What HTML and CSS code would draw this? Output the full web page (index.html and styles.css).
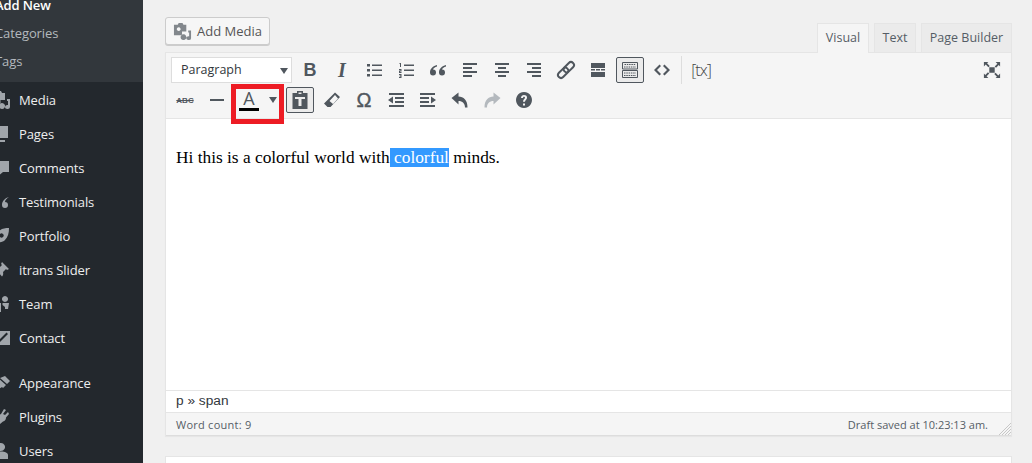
FILE: index.html
```html
<!DOCTYPE html>
<html lang="en">
<head>
<meta charset="utf-8">
<title>Edit Post</title>
<link rel="stylesheet" href="styles.css">
</head>
<body>
<aside class="sidebar">
  <ul class="submenu">
    <li class="current">Add New</li>
    <li>Categories</li>
    <li>Tags</li>
  </ul>
  <ul class="menu">
    <li><svg viewBox="0 0 20 20"><path d="M1 3h4l1-2h4l1 2h3v7H9.500v4H1zM6 5.500a2 2 0 1 0 .01 0z M16 9h3v8a2.500 2 0 1 1-2-2V11h-1zM11 13a3 3 0 1 0 .01 0z" fill-rule="evenodd"/></svg>Media</li>
    <li><svg viewBox="0 0 20 20"><path d="M3 2h14v12H3zM1 15h2v1h11v2H1z"/></svg>Pages</li>
    <li><svg viewBox="0 0 20 20"><path d="M3 3h15v11h-6l-5 4v-4H3z"/></svg>Comments</li>
    <li><svg viewBox="0 0 20 20"><path d="M9 5C5 6 2 9 2 13a3 3 0 1 0 3-3c0-2 2-4 4-5zM18 5c-4 1-7 4-7 8a3 3 0 1 0 3-3c0-2 2-4 4-5z"/></svg>Testimonials</li>
    <li><svg viewBox="0 0 20 20"><path d="M18 2c-5 0-9 1-12 5-2 3-2 6-1 8l-3 3 1 1 3-3c3 1 6 0 8-2 3-3 4-7 4-12zM9 8a2 2 0 1 1 3 3 2 2 0 0 1-3-3z" fill-rule="evenodd"/></svg>Portfolio</li>
    <li><svg viewBox="0 0 20 20"><path d="M11 2l7 7-2 1-1-1-3 3c.5 2 0 3.500-1 4.500L8 13l-5 5-1-.5 5-5.500-3.500-3c1-1 2.500-1.500 4.500-1l3-3-1-1z"/></svg>itrans Slider</li>
    <li><svg viewBox="0 0 20 20"><path d="M6 2a3 3 0 1 1-.01 0zM14 2a3 3 0 1 1-.01 0zM2 9h8v9H3zM11.500 9H18l-1 6h-3v-2l-2.500-2z"/></svg>Team</li>
    <li class="gap-after"><svg viewBox="0 0 20 20"><path d="M1 3h18v14H1zM5 9l-1.500 1.500L8 15l9-9-1.500-1.500L8 12z" fill-rule="evenodd"/></svg>Contact</li>
    <li><svg viewBox="0 0 20 20"><path d="M14 3l5 5-3 3-7-6zM8 6l7 6-3 3-1-1-5 3-3-3 3-4z"/></svg>Appearance</li>
    <li><svg viewBox="0 0 20 20"><path d="M13 2l2 1-3 4 2 1 3-3 1 2-3 3.500c0 2-1 3.500-3 4L9 17l-2 2-4-4 2-2 .5-3C7 8 9 7.500 10 7z"/></svg>Plugins</li>
    <li><svg viewBox="0 0 20 20"><path d="M10 2a4 4 0 1 1-.01 0zM3 18v-4c0-2 3-3.500 7-3.500s7 1.500 7 3.500v4z"/></svg>Users</li>
  </ul>
</aside>
<main class="content">
  <div class="topbar">
    <button class="add-media"><svg viewBox="0 0 20 20"><path d="M1 3h4l1-2h4l1 2h3v7H9.500v4H1zM6 5.500a2 2 0 1 0 .01 0z M16 9h3v8a2.500 2 0 1 1-2-2V11h-1zM11 13a3 3 0 1 0 .01 0z" fill-rule="evenodd"/></svg>Add Media</button>
    <div class="tabs">
      <span class="tab active">Visual</span>
      <span class="tab">Text</span>
      <span class="tab">Page Builder</span>
    </div>
  </div>
  <section class="editor">
    <div class="toolbar">
      <div class="row">
        <div class="select">Paragraph<i class="caret"></i></div>
        <span class="btn glyph-b">B</span>
        <span class="btn glyph-i">I</span>
        <span class="btn"><svg viewBox="0 0 20 20"><path d="M3 4h3v2.500H3zM3 9h3v2.500H3zM3 14h3v2.500H3zM8 4.500h10V6H8zM8 9.500h10V11H8zM8 14.500h10V16H8z"/></svg></span>
        <span class="btn"><svg viewBox="0 0 20 20"><path d="M8 4.500h10V6H8zM8 9.500h10V11H8zM8 14.500h10V16H8zM3.500 3H5v4H4V4h-.5zM3 9h2.500v2.500H4V12h1.500v1H3v-2.500h1.500V10H3zM3 14h2.500v4H3v-1h1.500v-.5H3.500v-1h1V15H3z"/></svg></span>
        <span class="btn"><svg viewBox="0 0 20 20"><path d="M9 5C5 6 2 8.500 2 12.500a3 3 0 1 0 3-3C5.500 8 7 7 9 6.500zM18 5c-4 1-7 3.500-7 7.500a3 3 0 1 0 3-3c.5-1.500 2-2.500 4-3z"/></svg></span>
        <span class="btn"><svg viewBox="0 0 20 20"><path d="M3 3h14v2H3zM3 7h9v2H3zM3 11h14v2H3zM3 15h9v2H3z"/></svg></span>
        <span class="btn"><svg viewBox="0 0 20 20"><path d="M3 3h14v2H3zM6 7h8v2H6zM3 11h14v2H3zM6 15h8v2H6z"/></svg></span>
        <span class="btn"><svg viewBox="0 0 20 20"><path d="M3 3h14v2H3zM8 7h9v2H8zM3 11h14v2H3zM8 15h9v2H8z"/></svg></span>
        <span class="btn"><svg viewBox="0 0 20 20"><g class="stroke" transform="rotate(-45 10 10)"><rect x="0" y="7" width="12" height="6" rx="3"/><rect x="8" y="7" width="12" height="6" rx="3"/></g></svg></span>
        <span class="btn"><svg viewBox="0 0 20 20"><path d="M3 3h14v5H3zM3 9h4v1.500H3zM8 9h4v1.500H8zM13 9h4v1.500h-4zM3 12h14v5H3z"/></svg></span>
        <span class="btn active"><svg viewBox="0 0 20 20"><path class="thin" d="M2.500 2.500h15v6.500h-15zM2.500 10.500h15v7h-15z"/><path class="dots" d="M4.500 4.500h11M4 7h12M4 13h12M4 15.500h12"/></svg></span>
        <span class="btn"><svg viewBox="0 0 20 20"><path d="M7.500 4.500L2 10l5.500 5.500 1.500-1.500-4-4 4-4zM12.500 4.500L18 10l-5.500 5.500-1.500-1.500 4-4-4-4z"/></svg></span>
        <span class="sep"></span>
        <span class="btn glyph-tx">[tx]</span>
        <span class="btn push"><svg class="small" viewBox="0 0 20 20"><path d="M7 7h6v6H7zM1 1h5L4.500 2.500l3 3L6 7 3 4 1 6zM19 1v5l-1.500-1.500-3 3L13 6l3-3-2-2zM1 19v-5l1.500 1.500 3-3L7 14l-3 3 2 2zM19 19h-5l1.500-1.500-3-3L14 13l3 3 2-2z"/></svg></span>
      </div>
      <div class="row second">
        <span class="btn glyph-abc">ABC</span>
        <span class="btn"><svg viewBox="0 0 20 20"><path d="M3 9h14v2H3z"/></svg></span>
        <span class="btn color-btn">
          <span class="color-a">A</span><i class="caret"></i>
          <span class="highlight-box"></span>
        </span>
        <span class="btn active"><svg viewBox="0 0 20 20"><path d="M7 1h6v2h4.500v16h-15V3H7zM8.500 2.500v1.500h3V2.500zM5 7v2h3.500v7h3V9H15V7z" fill-rule="evenodd"/></svg></span>
        <span class="btn"><svg viewBox="0 0 20 20"><path d="M13 2.500l5 4.500-9.500 10H5.500L2 13.500zM13 5L7.500 11l3.500 3L16 8.500z" class="outline"/></svg></span>
        <span class="btn glyph-omega">Ω</span>
        <span class="btn"><svg viewBox="0 0 20 20"><path d="M3 3h15v2H3zM9 7h9v2H9zM9 11h9v2H9zM3 15h15v2H3zM7 6.500v7L2 10z"/></svg></span>
        <span class="btn"><svg viewBox="0 0 20 20"><path d="M2 3h15v2H2zM2 7h9v2H2zM2 11h9v2H2zM2 15h15v2H2zM13 6.500v7l5-3.500z"/></svg></span>
        <span class="btn"><svg viewBox="0 0 20 20"><path d="M8.500 2.500V6.500c5 0 9 3.500 9 11h-2.500c0-4-2.500-6.500-6.500-6.500v3.500L1.500 8z"/></svg></span>
        <span class="btn disabled"><svg viewBox="0 0 20 20"><path d="M11.500 2.500V6.500c-5 0-9 3.500-9 11H5c0-4 2.500-6.500 6.500-6.500v3.500L18.500 8z"/></svg></span>
        <span class="btn"><svg viewBox="0 0 20 20"><path d="M10 2a8 8 0 1 1-.01 0zM9 13.500v2h2v-2zM7 8h2c0-1 .5-1.300 1-1.300s1 .3 1 1c0 1-2 1.500-2 4h2c0-1.800 2-2 2-4.300C13 5.800 11.500 5 10 5S7 6 7 8z" fill-rule="evenodd"/></svg></span>
      </div>
    </div>
    <div class="body-text">
      <p>Hi this is a colorful world with<span class="selected"> colorful</span> minds.</p>
    </div>
    <div class="pathbar">p » span</div>
    <div class="status">
      <span class="count">Word count: 9</span>
      <span class="saved">Draft saved at 10:23:13 am.</span>
      <svg class="grip" viewBox="0 0 12 12"><path d="M0 12L12 0M3 12l9-9M6 12l6-6M9 12l3-3"/></svg>
    </div>
  </section>
  <section class="next-box"></section>
</main>
</body>
</html>
```
FILE: styles.css
```css
* { box-sizing: border-box; }
html, body { margin: 0; height: 463px; overflow: hidden; }
body { display: flex; background: #f0f0f0; font-family: "Open Sans", sans-serif; color: #555d66; }
ul { list-style: none; margin: 0; padding: 0; }

.sidebar { width: 143px; flex: none; height: 463px; overflow: hidden; background: #23282d; font-size: 13px; letter-spacing: -0.1px; }
.submenu { background: #32373c; margin-top: -9px; padding: 0 0 7px 0; color: #b4b9be; }
.submenu li { height: 28px; line-height: 28px; margin-left: -5px; }
.submenu .current { color: #fff; font-weight: 600; }
.menu { padding-top: 1px; margin-left: -9px; color: #eee; }
.menu li { height: 34px; display: flex; align-items: center; gap: 8px; }
.menu svg { width: 20px; height: 20px; fill: #a0a5aa; flex: none; }
.menu .gap-after { margin-bottom: 11px; }

.content { flex: 1; min-width: 0; padding: 17px 20px 0 22px; }
.topbar { display: flex; justify-content: space-between; align-items: flex-end; height: 35px; }
.add-media { width: 105px; height: 28px; align-self: flex-start; display: flex; align-items: center; gap: 5px; padding: 0 7px; background: #f6f6f6; border: 1px solid #ccc; border-radius: 3px; font: 13px "Open Sans", sans-serif; color: #555; box-shadow: 0 1px 0 #ccc; }
.add-media svg { width: 19px; height: 19px; fill: #82878c; flex: none; }
.tabs { display: flex; gap: 5px; height: 29px; }
.tab { line-height: 28px; height: 29px; border: 1px solid #e5e5e5; border-bottom: 0; background: #ebebeb; font-size: 12.500px; color: #555d66; text-align: center; white-space: nowrap; }
.tab.active { background: #f5f5f5; position: relative; z-index: 1; height: 30px; width: 52px; }
.tab:nth-child(2) { width: 42px; }
.tab:nth-child(3) { width: 91px; }

.editor { border: 1px solid #e5e5e5; border-bottom: 0; background: #fff; height: 384px; display: flex; flex-direction: column; box-shadow: 0 1px 1px rgba(0,0,0,.04); }
.toolbar { background: #f5f5f5; height: 66px; padding: 4px 0 0 5px; border-bottom: 1px solid #e5e5e5; flex: none; }
.row { display: flex; gap: 4px; height: 26px; margin-right: 5px; align-items: center; }
.row.second { margin-top: 4px; }
.select { width: 121px; height: 26px; background: #fff; border: 1px solid #ddd; padding-left: 9px; font-size: 12.500px; line-height: 24px; color: #32373c; position: relative; }
.select .caret { position: absolute; right: 3px; top: 10px; }
.caret { display: block; width: 0; height: 0; border: 4.500px solid transparent; border-top: 6px solid #50575e; border-bottom: 0; }

.btn { width: 28px; height: 26px; flex: none; display: flex; align-items: center; justify-content: center; color: #50575e; border: 1px solid transparent; border-radius: 2px; }
.btn svg { width: 20px; height: 20px; fill: #50575e; }
.btn svg.small { width: 18px; height: 18px; }
.btn.active { background: #ebebeb; border-color: #50575e; }
.btn.disabled svg { fill: #b4b9be; }
.btn .stroke { fill: none; stroke: #50575e; stroke-width: 2; }
.btn .thin { fill: none; stroke: #50575e; stroke-width: 1; }
.btn .dots { fill: none; stroke: #50575e; stroke-width: 1; stroke-dasharray: 1.500 .8; }
.btn .outline { fill: #50575e; fill-rule: evenodd; }
.push { margin-left: auto; }
.sep { width: 1px; height: 28px; background: #ddd; margin: 0 1px; }

.glyph-b { font: 700 18px "Liberation Sans", sans-serif; }
.glyph-i { font: italic 700 20px "Liberation Serif", serif; }
.glyph-abc { font: 700 8px "Liberation Sans", sans-serif; text-decoration: line-through; }
.glyph-omega { font: 400 20px "Liberation Sans", sans-serif; -webkit-text-stroke: .4px #50575e; }
.glyph-tx { font: 300 16px "Open Sans", sans-serif; letter-spacing: -1px; color: #444; }

.color-btn { width: 47px; position: relative; justify-content: flex-start; padding-left: 3px; }
.color-a { width: 20px; text-align: center; font: 400 18px/18px "Open Sans", sans-serif; border-bottom: 3px solid #000; height: 22px; }
.color-btn .caret { margin-left: 10px; }
.highlight-box { position: absolute; left: -5px; top: -4px; width: 53px; height: 40px; border: 5px solid #ed1c24; }

.body-text { flex: 1; background: #fff; padding: 29px 10px 0 10px; font: 17.330px/20px "Liberation Serif", serif; color: #000; }
.body-text p { margin: 0; }
.selected { background: #39f; color: #fff; }
.pathbar { height: 22px; border-top: 1px solid #e5e5e5; padding-left: 10px; font: 13.700px/20px "Liberation Sans", sans-serif; color: #32373c; background: #fff; flex: none; }
.status { height: 24px; flex: none; display: flex; justify-content: space-between; align-items: center; border-top: 1px solid #e5e5e5; border-bottom: 1px solid #ddd; background: #f5f5f5; padding: 0 23px 0 10px; font-size: 11px; color: #555d66; position: relative; }
.count { letter-spacing: .25px; }
.grip { position: absolute; right: 0; bottom: 0; width: 12px; height: 12px; stroke: #bbb; stroke-width: .8; fill: none; }

.next-box { height: 30px; margin-top: 20px; background: #fff; border: 1px solid #e5e5e5; }
```
